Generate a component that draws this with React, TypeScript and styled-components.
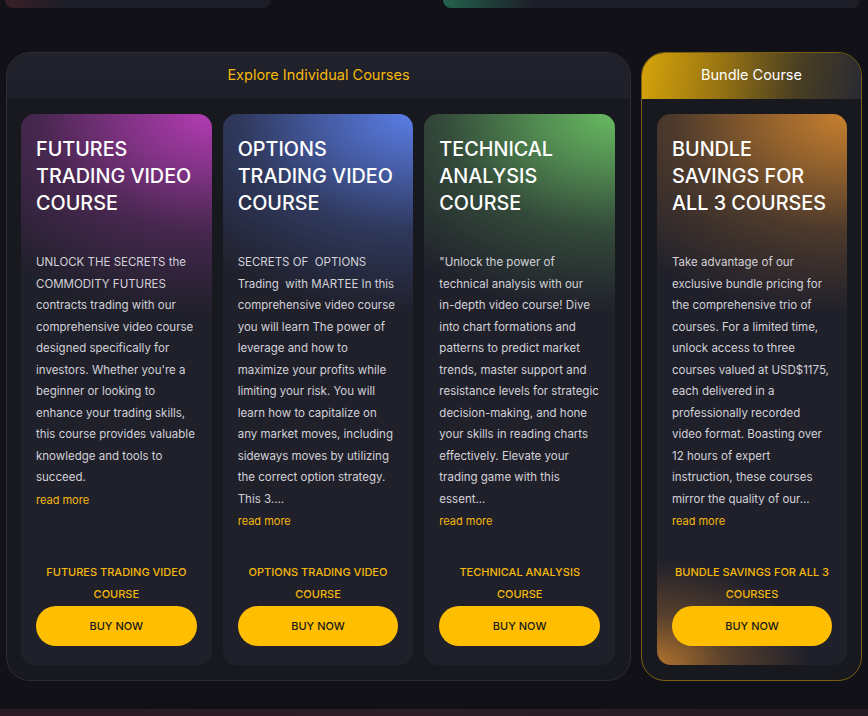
import React from 'react';
import styled, { createGlobalStyle } from 'styled-components';

const GlobalStyle = createGlobalStyle`
  body {
    margin: 0;
    background: #121118;
    font-family: 'Inter', 'Noto Sans', sans-serif;
  }
`;

interface Course {
  title: string;
  text: string;
  name: string;
  glow: string;
}

const courses: Course[] = [
  {
    title: 'FUTURES TRADING VIDEO COURSE',
    text: "UNLOCK THE SECRETS the COMMODITY FUTURES contracts trading with our comprehensive video course designed specifically for investors. Whether you're a beginner or looking to enhance your trading skills, this course provides valuable knowledge and tools to succeed.",
    name: 'FUTURES TRADING VIDEO COURSE',
    glow: '#b43cb4',
  },
  {
    title: 'OPTIONS TRADING VIDEO COURSE',
    text: 'SECRETS OF  OPTIONS Trading  with MARTEE In this comprehensive video course you will learn The power of leverage and how to maximize your profits while limiting your risk. You will learn how to capitalize on any market moves, including sideways moves by utilizing the correct option strategy. This 3....',
    name: 'OPTIONS TRADING VIDEO COURSE',
    glow: '#5a7de6',
  },
  {
    title: 'TECHNICAL ANALYSIS COURSE',
    text: '"Unlock the power of technical analysis with our in-depth video course! Dive into chart formations and patterns to predict market trends, master support and resistance levels for strategic decision-making, and hone your skills in reading charts effectively. Elevate your trading game with this essent...',
    name: 'TECHNICAL ANALYSIS COURSE',
    glow: '#68bb62',
  },
];

const bundle: Course = {
  title: 'BUNDLE SAVINGS FOR ALL 3 COURSES',
  text: 'Take advantage of our exclusive bundle pricing for the comprehensive trio of courses. For a limited time, unlock access to three courses valued at USD$1175, each delivered in a professionally recorded video format. Boasting over 12 hours of expert instruction, these courses mirror the quality of our...',
  name: 'BUNDLE SAVINGS FOR ALL 3 COURSES',
  glow: '#c8802e',
};

const Page = styled.div`
  width: 868px;
  height: 716px;
  display: flex;
  flex-direction: column;
  overflow: hidden;
`;

const TopRow = styled.div`
  height: 8px;
  display: flex;
  padding: 0 8px 0 5px;
  gap: 172px;
`;

const TopStub = styled.div<{ $tint: string; $w: number }>`
  width: ${(p) => p.$w}px;
  height: 8px;
  border-radius: 0 0 12px 12px;
  background: linear-gradient(90deg, ${(p) => p.$tint} 0%, #1d1d27 22%, #1d1d27 100%);
`;

const Section = styled.div`
  display: flex;
  gap: 10px;
  padding: 44px 6px 0 6px;
`;

const Panel = styled.div<{ $bundle?: boolean }>`
  width: ${(p) => (p.$bundle ? 221 : 625)}px;
  height: 629px;
  box-sizing: border-box;
  border: 1px solid ${(p) => (p.$bundle ? '#7a5f12' : '#2b2c36')};
  border-radius: 24px;
  background: #18181f;
  display: flex;
  flex-direction: column;
  overflow: hidden;
`;

const PanelHeader = styled.div<{ $bundle?: boolean }>`
  height: 46px;
  box-sizing: border-box;
  padding-bottom: 4px;
  flex-shrink: 0;
  display: flex;
  align-items: center;
  justify-content: center;
  font-size: 14.5px;
  color: ${(p) => (p.$bundle ? '#ffffff' : '#f4b90a')};
  background: ${(p) =>
    p.$bundle
      ? 'linear-gradient(100deg, #d6a40a 0%, #9a7512 35%, #4a3f22 70%, #2a2a33 100%)'
      : 'linear-gradient(180deg, #22222d 0%, #1f1f29 100%)'};
`;

const PanelBody = styled.div<{ $bundle?: boolean }>`
  flex: 1;
  display: flex;
  gap: 11px;
  padding: ${(p) => (p.$bundle ? '15px 14px 15px 15px' : '15px 15px 15px 14px')};
`;

const Card = styled.div<{ $glow: string; $bundle?: boolean }>`
  flex: 1;
  min-width: 0;
  border-radius: 14px;
  padding: 22px 15px 19px 15px;
  display: flex;
  flex-direction: column;
  background: ${(p) =>
    `radial-gradient(ellipse 300px 200px at 100% 0%, ${p.$glow} 0%, ${p.$glow}aa 28%, ${p.$glow}44 58%, transparent 100%),` +
    (p.$bundle ? `radial-gradient(ellipse 200px 140px at 0% 100%, ${p.$glow}dd 0%, ${p.$glow}55 35%, transparent 75%),` : '') +
    `#20202b`};
`;

const CardTitle = styled.h3`
  margin: 0;
  font-size: 19.8px;
  line-height: 27px;
  font-weight: 500;
  color: #ffffff;
`;

const Description = styled.p`
  margin: 35px 0 0 0;
  font-size: 11.5px;
  line-height: 21.5px;
  color: #d2d2d8;
  white-space: pre-wrap;
`;

const ReadMore = styled.a`
  font-size: 11px;
  line-height: 22px;
  color: #f4b90a;
  cursor: pointer;
`;

const Bottom = styled.div`
  margin-top: auto;
  display: flex;
  flex-direction: column;
  align-items: stretch;
`;

const CourseName = styled.div`
  text-align: center;
  font-size: 11px;
  line-height: 22px;
  font-weight: 500;
  color: #f4b90a;
  margin-bottom: 1px;
`;

const BuyButton = styled.button`
  height: 40px;
  border: none;
  border-radius: 20px;
  background: #ffbf00;
  color: #1a1a1a;
  font-family: inherit;
  font-size: 11px;
  font-weight: 500;
  cursor: pointer;
`;

const BottomStrip = styled.div`
  margin-top: auto;
  height: 7px;
  background: linear-gradient(90deg, #2a1b22 0%, #2c1d24 50%, #241a22 100%);
`;

function CourseCard({ course, bundle }: { course: Course; bundle?: boolean }) {
  return (
    <Card $glow={course.glow} $bundle={bundle}>
      <CardTitle>{course.title}</CardTitle>
      <Description>{course.text}</Description>
      <ReadMore>read more</ReadMore>
      <Bottom>
        <CourseName>{course.name}</CourseName>
        <BuyButton>BUY NOW</BuyButton>
      </Bottom>
    </Card>
  );
}

export default function App() {
  return (
    <Page>
      <GlobalStyle />
      <TopRow>
        <TopStub $tint="#3a1f26" $w={266} />
        <TopStub $tint="#23614c" $w={418} />
      </TopRow>
      <Section>
        <Panel>
          <PanelHeader>Explore Individual Courses</PanelHeader>
          <PanelBody>
            {courses.map((c) => (
              <CourseCard key={c.title} course={c} />
            ))}
          </PanelBody>
        </Panel>
        <Panel $bundle>
          <PanelHeader $bundle>Bundle Course</PanelHeader>
          <PanelBody $bundle>
            <CourseCard course={bundle} bundle />
          </PanelBody>
        </Panel>
      </Section>
      <BottomStrip />
    </Page>
  );
}
